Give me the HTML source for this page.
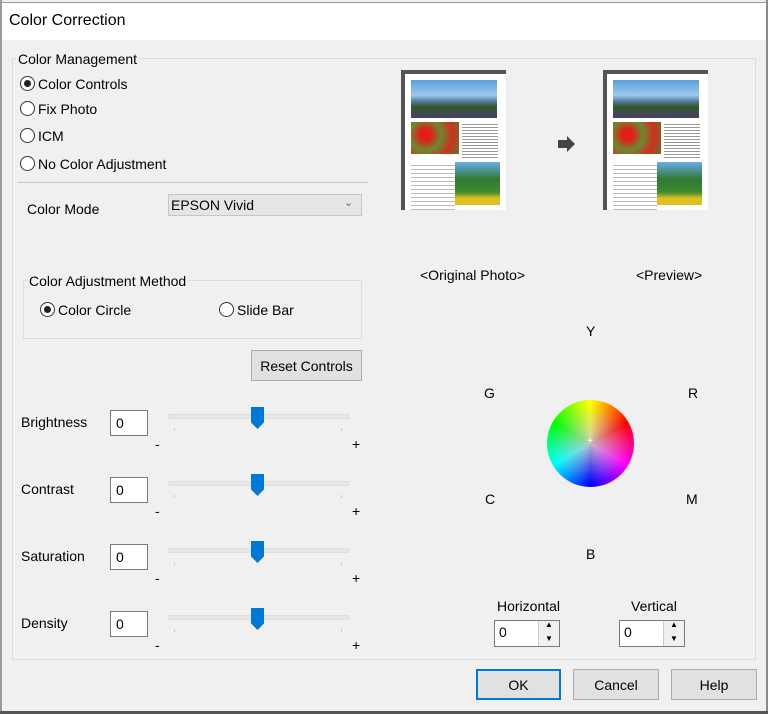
<!DOCTYPE html><html><head><style>
*{box-sizing:border-box;margin:0;padding:0}
body{width:768px;height:714px;background:#f0f0f0;font-family:"Liberation Sans",sans-serif;font-size:14px;color:#000;position:relative;overflow:hidden}
.a{position:absolute}
.t{position:absolute;white-space:nowrap}
.rad{position:absolute;width:15px;height:15px;border:1px solid #333;border-radius:50%;background:#fff}
.rad.on::after{content:"";position:absolute;left:3px;top:3px;width:7px;height:7px;border-radius:50%;background:#222}
.inp{position:absolute;width:38px;height:26px;background:#fff;border:1px solid #7a7a7a;padding:4px 0 0 5px}
.btn{position:absolute;background:#e1e1e1;border:1px solid #adadad;text-align:center}
.track{position:absolute;left:168px;width:181px;height:5px;background:#e7e7e7;border:1px solid #dedede}
.thumb{position:absolute;left:251px;width:13px;height:22px;background:#0078d7;clip-path:polygon(0 0,100% 0,100% 70%,50% 100%,0 70%)}
.tick{position:absolute;width:1px;height:3px;background:#c8c8c8}
.page{position:absolute;width:105px;height:140px;background:#fff;box-shadow:inset 4px 4px 0 #555}
</style></head><body>
<div class="a" style="left:0;top:0;width:768px;height:3px;background:#f0f0f0;border-bottom:1px solid #999"></div>
<div class="a" style="left:0;top:3px;width:767px;height:37px;background:#fff"></div>
<div class="a" style="left:766px;top:0;width:2px;height:714px;background:#8a8a8a"></div>
<div class="a" style="left:0;top:0;width:2px;height:714px;background:#9a9a9a"></div>
<div class="a" style="left:0;top:711px;width:768px;height:3px;background:#555"></div>
<div class="t" style="left:9px;top:12px;font-size:16px">Color Correction</div>

<div class="a" style="left:12px;top:58px;width:744px;height:602px;border:1px solid #dcdcdc"></div>
<div class="t" style="left:16px;top:51px;background:#f0f0f0;padding:0 2px">Color Management</div>
<div class="rad on" style="left:20px;top:76px"></div><div class="t" style="left:38px;top:76px">Color Controls</div>
<div class="rad" style="left:20px;top:101px"></div><div class="t" style="left:38px;top:101px">Fix Photo</div>
<div class="rad" style="left:20px;top:128px"></div><div class="t" style="left:38px;top:128px">ICM</div>
<div class="rad" style="left:20px;top:156px"></div><div class="t" style="left:38px;top:156px">No Color Adjustment</div>
<div class="a" style="left:18px;top:182px;width:350px;height:1px;background:#c8c8c8"></div>
<div class="t" style="left:27px;top:201px">Color Mode</div>
<div class="a" style="left:168px;top:194px;width:194px;height:22px;background:#e5e5e5;border:1px solid #c6c6c6"></div>
<div class="t" style="left:171px;top:197px">EPSON Vivid</div>
<div class="t" style="left:344px;top:196px;font-size:11px;color:#666">&#8964;</div>

<div class="a" style="left:23px;top:280px;width:339px;height:59px;border:1px solid #dcdcdc"></div>
<div class="t" style="left:27px;top:273px;background:#f0f0f0;padding:0 2px">Color Adjustment Method</div>
<div class="rad on" style="left:40px;top:302px"></div><div class="t" style="left:58px;top:302px">Color Circle</div>
<div class="rad" style="left:219px;top:302px"></div><div class="t" style="left:237px;top:302px">Slide Bar</div>
<div class="btn" style="left:251px;top:350px;width:111px;height:31px;padding-top:7px">Reset Controls</div>

<div class="t" style="left:21px;top:414px">Brightness</div><div class="inp" style="left:110px;top:410px">0</div>
<div class="track" style="top:414px"></div><div class="thumb" style="top:407px"></div>
<div class="tick" style="left:174px;top:428px"></div><div class="tick" style="left:341px;top:428px"></div>
<div class="t" style="left:155px;top:436px">-</div><div class="t" style="left:352px;top:436px">+</div>

<div class="t" style="left:21px;top:481px">Contrast</div><div class="inp" style="left:110px;top:477px">0</div>
<div class="track" style="top:481px"></div><div class="thumb" style="top:474px"></div>
<div class="tick" style="left:174px;top:495px"></div><div class="tick" style="left:341px;top:495px"></div>
<div class="t" style="left:155px;top:503px">-</div><div class="t" style="left:352px;top:503px">+</div>

<div class="t" style="left:21px;top:548px">Saturation</div><div class="inp" style="left:110px;top:544px">0</div>
<div class="track" style="top:548px"></div><div class="thumb" style="top:541px"></div>
<div class="tick" style="left:174px;top:562px"></div><div class="tick" style="left:341px;top:562px"></div>
<div class="t" style="left:155px;top:570px">-</div><div class="t" style="left:352px;top:570px">+</div>

<div class="t" style="left:21px;top:615px">Density</div><div class="inp" style="left:110px;top:611px">0</div>
<div class="track" style="top:615px"></div><div class="thumb" style="top:608px"></div>
<div class="tick" style="left:174px;top:629px"></div><div class="tick" style="left:341px;top:629px"></div>
<div class="t" style="left:155px;top:637px">-</div><div class="t" style="left:352px;top:637px">+</div>

<!-- pages -->
<div class="page" style="left:401px;top:70px">
 <div class="a" style="left:10px;top:10px;width:86px;height:38px;background:linear-gradient(#5a9fdc 0,#9cc9ee 40%,#5a7fa0 55%,#2f5a2a 70%,#4a3f6a 100%)"></div>
 <div class="a" style="left:10px;top:52px;width:48px;height:32px;background:radial-gradient(circle at 30% 40%,#e02018 15%,#6a8a30 40%,#d03020 70%,#5a7a2a)"></div>
 <div class="a" style="left:61px;top:52px;width:36px;height:36px;background:repeating-linear-gradient(#fff 0 2px,#999 2px 3px)"></div>
 <div class="a" style="left:10px;top:92px;width:44px;height:48px;background:repeating-linear-gradient(#fff 0 3px,#aaa 3px 4px);opacity:.8"></div>
 <div class="a" style="left:54px;top:92px;width:45px;height:43px;background:linear-gradient(#6aaaee 0,#2f7a30 40%,#3f8a30 70%,#e0c020 85%)"></div>
</div>
<div class="page" style="left:603px;top:70px">
 <div class="a" style="left:10px;top:10px;width:86px;height:38px;background:linear-gradient(#5a9fdc 0,#9cc9ee 40%,#5a7fa0 55%,#2f5a2a 70%,#4a3f6a 100%)"></div>
 <div class="a" style="left:10px;top:52px;width:48px;height:32px;background:radial-gradient(circle at 30% 40%,#e02018 15%,#6a8a30 40%,#d03020 70%,#5a7a2a)"></div>
 <div class="a" style="left:61px;top:52px;width:36px;height:36px;background:repeating-linear-gradient(#fff 0 2px,#999 2px 3px)"></div>
 <div class="a" style="left:10px;top:92px;width:44px;height:48px;background:repeating-linear-gradient(#fff 0 3px,#aaa 3px 4px);opacity:.8"></div>
 <div class="a" style="left:54px;top:92px;width:45px;height:43px;background:linear-gradient(#6aaaee 0,#2f7a30 40%,#3f8a30 70%,#e0c020 85%)"></div>
</div>
<svg class="a" style="left:558px;top:136px" width="18" height="16"><path d="M0 4h9V0l8 8-8 8v-4H0z" fill="#444"/></svg>
<div class="t" style="left:420px;top:267px">&lt;Original Photo&gt;</div>
<div class="t" style="left:636px;top:267px">&lt;Preview&gt;</div>

<div class="t" style="left:586px;top:323px">Y</div>
<div class="t" style="left:484px;top:385px">G</div>
<div class="t" style="left:688px;top:385px">R</div>
<div class="t" style="left:485px;top:491px">C</div>
<div class="t" style="left:686px;top:491px">M</div>
<div class="t" style="left:586px;top:546px">B</div>
<div class="a" style="left:547px;top:400px;width:87px;height:87px;border-radius:50%;background:radial-gradient(circle,rgba(200,200,200,.9) 0,rgba(220,220,220,0) 65%),conic-gradient(#ff0 0deg,#f00 60deg,#f0f 120deg,#00f 180deg,#0ff 240deg,#0f0 300deg,#ff0 360deg)"></div>
<div class="t" style="left:587px;top:436px;color:#fff;font-size:10px">+</div>

<div class="t" style="left:497px;top:598px">Horizontal</div>
<div class="t" style="left:631px;top:598px">Vertical</div>
<div class="a" style="left:494px;top:620px;width:66px;height:27px;background:#fff;border:1px solid #7a7a7a"></div>
<div class="t" style="left:499px;top:624px">0</div>
<div class="a" style="left:538px;top:621px;width:21px;height:25px;background:#f0f0f0;border-left:1px solid #ccc"></div>
<div class="t" style="left:545px;top:620px;font-size:8px">&#9650;</div><div class="t" style="left:545px;top:634px;font-size:8px">&#9660;</div>
<div class="a" style="left:619px;top:620px;width:66px;height:27px;background:#fff;border:1px solid #7a7a7a"></div>
<div class="t" style="left:624px;top:624px">0</div>
<div class="a" style="left:663px;top:621px;width:21px;height:25px;background:#f0f0f0;border-left:1px solid #ccc"></div>
<div class="t" style="left:670px;top:620px;font-size:8px">&#9650;</div><div class="t" style="left:670px;top:634px;font-size:8px">&#9660;</div>

<div class="btn" style="left:476px;top:669px;width:85px;height:31px;border:2px solid #0078d7;padding-top:6px">OK</div>
<div class="btn" style="left:573px;top:669px;width:86px;height:31px;padding-top:7px">Cancel</div>
<div class="btn" style="left:671px;top:669px;width:86px;height:31px;padding-top:7px">Help</div>
</body></html>
